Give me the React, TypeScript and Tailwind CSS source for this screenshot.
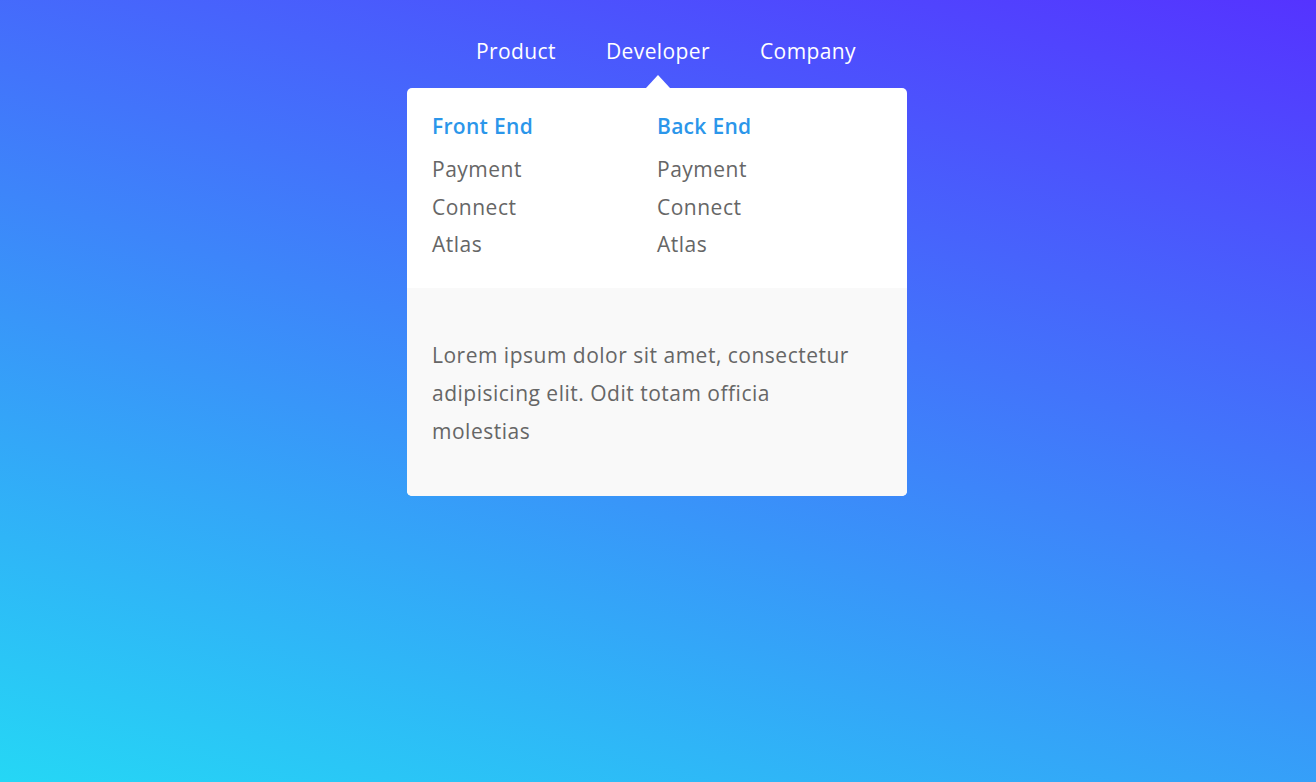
import React from "react";

const columns = [
  { title: "Front End", links: ["Payment", "Connect", "Atlas"] },
  { title: "Back End", links: ["Payment", "Connect", "Atlas"] },
];

const App = () => {
  return (
    <div className="w-[1316px] h-[782px] overflow-hidden bg-[linear-gradient(17deg,#25d7f5,#5533ff)] font-['Open_Sans',sans-serif] pr-[2px]">
      <nav className="flex justify-center pt-[36px] pl-[18px]">
        <ul className="flex gap-[50px] text-[21px] leading-[30px] font-medium tracking-[0.4px] text-white">
          <li>Product</li>
          <li className="relative">
            Developer
            {/* little arrow pointing at the open menu */}
            <span className="absolute left-1/2 top-[39px] -translate-x-1/2 w-0 h-0 border-x-[12px] border-x-transparent border-b-[13px] border-b-white" />
          </li>
          <li>Company</li>
        </ul>
      </nav>

      <div className="mx-auto mt-[22px] w-[500px] rounded-[5px] overflow-hidden bg-white">
        <div className="flex px-[25px] pt-[24px] h-[200px]">
          {columns.map((col, i) => (
            <div key={i} className="w-[225px]">
              <h3 className="text-[21px] leading-[28px] font-semibold tracking-[0.3px] text-[#2b96ea]">
                {col.title}
              </h3>
              <ul className="mt-[11px] text-[21px] leading-[37.5px] tracking-[0.5px] text-[#666666]">
                {col.links.map((link) => (
                  <li key={link}>{link}</li>
                ))}
              </ul>
            </div>
          ))}
        </div>
        <div className="bg-[#f9f9f9] h-[208px] px-[25px] pt-[48px]">
          <p className="max-w-[430px] text-[21px] leading-[38px] tracking-[0.5px] text-[#666666]">
            Lorem ipsum dolor sit amet, consectetur adipisicing elit. Odit
            totam officia molestias
          </p>
        </div>
      </div>
    </div>
  );
};

export default App;
